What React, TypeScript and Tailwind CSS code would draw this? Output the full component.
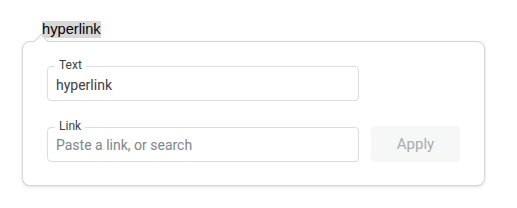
export default function App() {
  return (
    <div className="w-[517px] h-[208px] bg-white font-['Roboto',_sans-serif]">
      <div className="pt-[17px] pl-[42px] h-[34px]">
        <span className="bg-[#d8d8d8] text-[14.67px] leading-[17px] text-black font-['Liberation_Sans',_Arial,_sans-serif] inline-block">
          hyperlink
        </span>
      </div>

      <div className="relative ml-[22px] mt-[7px] w-[463px] rounded-[8px] border border-[#d6d6d6] bg-white px-[24px] pt-[24px] pb-[23px] shadow-[0_1px_3px_rgba(60,64,67,0.18)]">
        <div className="absolute -top-[6px] left-[13px] h-[10px] w-[10px] rotate-45 border-l border-t border-[#d6d6d6] bg-white" />

        <div className="relative flex h-[35px] w-[312px] items-center rounded-[4px] border border-[#dadce0] px-[8px]">
          <span className="absolute -top-[10px] left-[7px] bg-white px-[4px] text-[12px] leading-[16px] text-[#3c4043]">
            Text
          </span>
          <span className="mt-[3px] text-[14px] text-[#3c4043]">hyperlink</span>
        </div>

        <div className="mt-[25px] flex items-center gap-[12px]">
          <div className="relative flex h-[35px] w-[312px] items-center rounded-[4px] border border-[#dadce0] px-[8px]">
            <span className="absolute -top-[10px] left-[7px] bg-white px-[4px] text-[12px] leading-[16px] text-[#3c4043]">
              Link
            </span>
            <span className="mt-[3px] text-[14px] text-[#80868b]">Paste a link, or search</span>
          </div>
          <button
            disabled
            className="h-[36px] w-[89px] rounded-[4px] bg-[#f6f7f7] text-[15px] text-[#a9abad]"
          >
            Apply
          </button>
        </div>
      </div>
    </div>
  )
}
